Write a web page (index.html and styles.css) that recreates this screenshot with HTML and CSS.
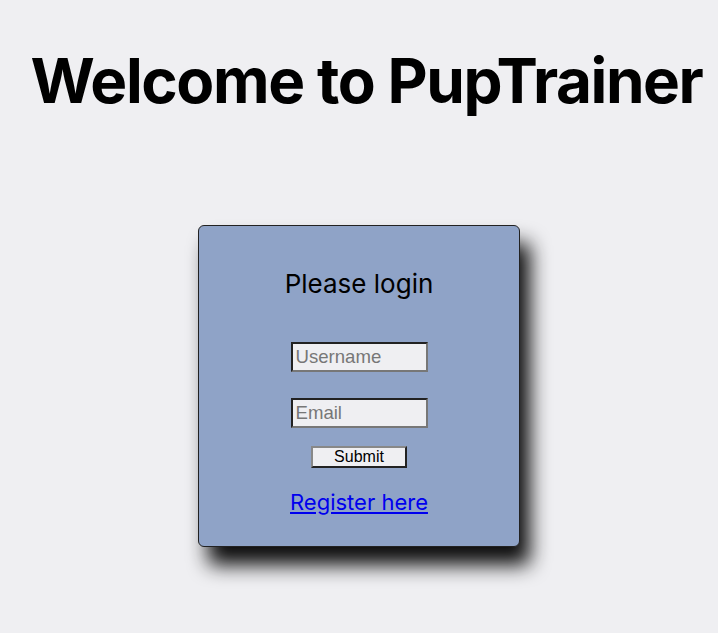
FILE: index.html
```html
<!DOCTYPE html>
<html>
<head>
<meta charset="utf-8">
<link rel="stylesheet" href="styles.css">
</head>
<body>
<h1 class="title">Welcome to PupTrainer</h1>
<div class="card">
  <h2 class="card-title">Please login</h2>
  <form class="form">
    <input class="field" type="text" placeholder="Username">
    <input class="field" type="email" placeholder="Email">
    <button class="submit" type="button">Submit</button>
  </form>
  <a class="register" href="#">Register here</a>
</div>
</body>
</html>
```
FILE: styles.css
```css
html, body {
  margin: 0;
  padding: 0;
}
html {
  background: #efeff2;
}
body {
  min-height: 100vh;
  box-sizing: border-box;
  padding-bottom: 60px;
  background: #efeff2;
  font-family: Inter, "Liberation Sans", sans-serif;
  color: #000;
  display: flex;
  flex-direction: column;
  align-items: center;
}
.title {
  margin: 43px 0 0 15px;
  font-size: 62px;
  font-weight: 700;
  letter-spacing: -1.4px;
  line-height: 76px;
}
.card {
  margin-top: 106px;
  width: 322px;
  height: 322px;
  box-sizing: border-box;
  background: #8fa3c7;
  border: 1px solid #222;
  border-radius: 6px;
  box-shadow: 10px 18px 20px rgba(0,0,0,0.95);
  display: flex;
  flex-direction: column;
  align-items: center;
}
.card-title {
  margin: 42px 0 0 0;
  font-size: 26px;
  font-weight: 400;
  line-height: 32px;
}
.form {
  margin-top: 42px;
  display: flex;
  flex-direction: column;
  align-items: center;
}
.field {
  width: 137px;
  height: 30px;
  box-sizing: border-box;
  margin: 0 0 26px 0;
  padding: 0 3px;
  background: #efeff2;
  border: 2px solid;
  border-color: #222 #777 #777 #222;
  font-family: "Liberation Sans", Arial, sans-serif;
  font-size: 18.6px;
  color: #000;
  outline: none;
}
.field:nth-child(2) {
  margin-bottom: 18px;
}
.field::placeholder {
  color: #777;
}
.submit {
  width: 96px;
  height: 22px;
  box-sizing: border-box;
  padding: 0;
  background: #efeff2;
  border: 2px solid;
  border-color: #888 #222 #222 #888;
  font-family: "Liberation Sans", Arial, sans-serif;
  font-size: 16px;
  line-height: 18px;
  color: #000;
}
.register {
  margin-top: 21px;
  font-size: 22px;
  color: #0000ee;
  text-decoration: underline;
}
```
